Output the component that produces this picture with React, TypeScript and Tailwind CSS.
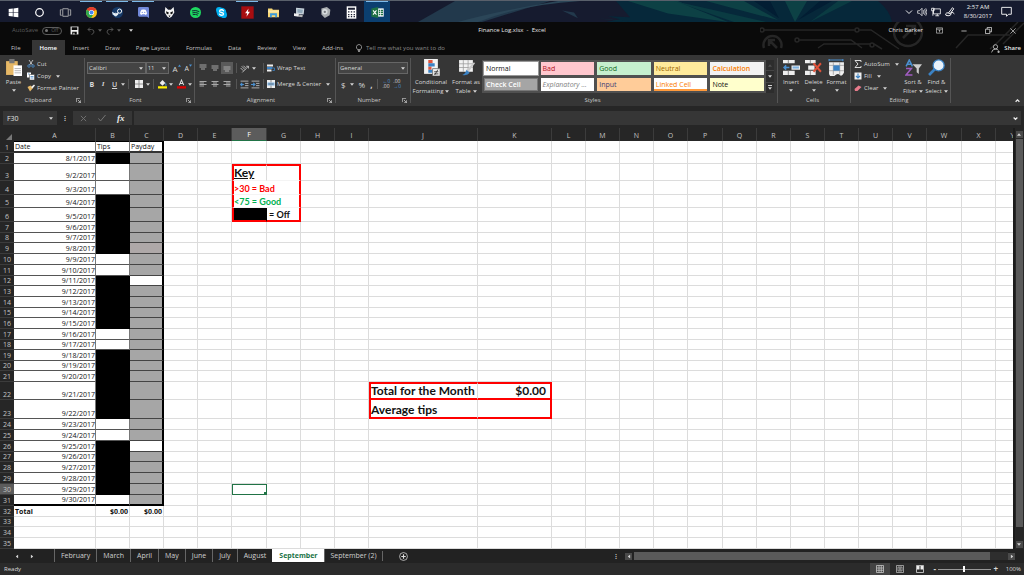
import type { ReactNode } from "react";
import clsx from "clsx";

const columns = [
  { name: "A", width: 82 },
  { name: "B", width: 34 },
  { name: "C", width: 34 },
  { name: "D", width: 34 },
  { name: "E", width: 34 },
  { name: "F", width: 35 },
  { name: "G", width: 34 },
  { name: "H", width: 34 },
  { name: "I", width: 34 },
  { name: "J", width: 109 },
  { name: "K", width: 74 },
  { name: "L", width: 34 },
  { name: "M", width: 34 },
  { name: "N", width: 34 },
  { name: "O", width: 34 },
  { name: "P", width: 35 },
  { name: "Q", width: 34 },
  { name: "R", width: 34 },
  { name: "S", width: 34 },
  { name: "T", width: 34 },
  { name: "U", width: 34 },
  { name: "V", width: 34 },
  { name: "W", width: 35 },
  { name: "X", width: 34 },
  { name: "Y", width: 34 },
];

const rowHeaderWidth = 14;
const tableWidth = columns.reduce((sum, col) => sum + col.width, rowHeaderWidth);

const rowHeights = [
  12, 11, 17, 14, 13, 14, 11, 10, 11, 11, 11, 10, 11, 11, 10, 11, 11, 10, 11, 10, 11, 18, 19, 11, 11,
  11, 10, 11, 11, 11, 11, 11, 10, 11, 11,
];

const dates = [
  "8/1/2017", "9/2/2017", "9/3/2017", "9/4/2017", "9/5/2017", "9/6/2017", "9/7/2017", "9/8/2017",
  "9/9/2017", "9/10/2017", "9/11/2017", "9/12/2017", "9/13/2017", "9/14/2017", "9/15/2017",
  "9/16/2017", "9/17/2017", "9/18/2017", "9/19/2017", "9/20/2017", "9/21/2017", "9/22/2017",
  "9/23/2017", "9/24/2017", "9/25/2017", "9/26/2017", "9/27/2017", "9/28/2017", "9/29/2017",
  "9/30/2017",
];

const offRows = [2, 5, 6, 7, 8, 9, 12, 13, 14, 15, 16, 19, 20, 21, 22, 23, 26, 27, 28, 29, 30];
const paydayRows = [12, 26];

const cellText: Record<string, string> = {
  A1: "Date",
  B1: "Tips",
  C1: "Payday",
  F3: "Key",
  F4: ">30 = Bad",
  F5: "<75 = Good",
  G6: "= Off",
  J22: "Total for the Month",
  K22: "$0.00",
  J23: "Average tips",
  A32: "Total",
  B32: "$0.00",
  C32: "$0.00",
};
dates.forEach((date, i) => {
  cellText[`A${i + 2}`] = date;
});

const specialCells: Record<string, string> = {
  A1: "border-t border-b-2 border-t-black border-r-[#777] border-b-[#333] pl-px leading-[8px]",
  B1: "border-t border-b-2 border-t-black border-r-[#777] border-b-[#333] pl-px leading-[8px]",
  C1: "border-t border-r-2 border-b-2 border-t-black border-r-black border-b-[#333] pl-px leading-[8px]",
  F3: "border-t-2 border-l-2 border-t-[#ff0000] border-l-[#ff0000] border-r-[#dcdcdc] border-b-[#f4f4f4] font-[Lato] text-[12px] leading-[14px] font-bold underline",
  G3: "border-t-2 border-r-2 border-t-[#ff0000] border-r-[#ff0000] border-b-[#f4f4f4]",
  F4: "border-l-2 border-l-[#ff0000] border-r-white border-b-[#f4f4f4] font-[Lato] text-[9px] leading-[11px] font-bold text-[#ff0000]",
  G4: "border-r-2 border-r-[#ff0000] border-b-[#f4f4f4]",
  F5: "border-l-2 border-l-[#ff0000] border-r-white border-b-[#f4f4f4] font-[Lato] text-[9px] leading-[11px] font-bold text-[#00b050]",
  G5: "border-r-2 border-r-[#ff0000] border-b-[#f4f4f4]",
  F6: "border-b-2 border-l-2 border-r-black border-b-[#ff0000] border-l-[#ff0000] bg-black",
  G6: "border-r-2 border-b-2 border-r-[#ff0000] border-b-[#ff0000] pl-[2px] font-[Lato] text-[9px] leading-[11px] font-bold",
  J22: "border-t-2 border-b-2 border-l-2 border-t-[#ff0000] border-r-[#dcdcdc] border-b-[#ff0000] border-l-[#ff0000] font-[Lato] text-[12px] leading-[14px] font-bold",
  K22: "border-t-2 border-r-2 border-b-2 border-t-[#ff0000] border-r-[#ff0000] border-b-[#ff0000] pr-1 text-right font-[Lato] text-[12px] leading-[14px] font-bold",
  J23: "border-b-2 border-l-2 border-r-[#dcdcdc] border-b-[#ff0000] border-l-[#ff0000] font-[Lato] text-[12px] leading-[14px] font-bold",
  K23: "border-r-2 border-b-2 border-r-[#ff0000] border-b-[#ff0000]",
  A32: "border-r-[#dcdcdc] border-b-[#dcdcdc] pl-px leading-[8px] font-bold",
  B32: "border-r-[#dcdcdc] border-b-[#dcdcdc] pr-px text-right leading-[8px] font-bold",
  C32: "border-r-[#dcdcdc] border-b-[#dcdcdc] pr-px text-right leading-[8px] font-bold",
  F30: "relative border-r-[#217346] border-b-[#217346] outline outline-1 -outline-offset-1 outline-[#217346]",
};

function cellClass(col: string, row: number) {
  const special = specialCells[`${col}${row}`];
  if (special) return special;
  const last = row === 31;
  if (row >= 2 && row <= 31) {
    if (col === "A") {
      return clsx(
        "border-r-[#777] text-right leading-[8px]",
        last ? "border-b-2 border-b-black" : "border-b-[#555]",
      );
    }
    if (col === "B") {
      if (last) return "border-b-2 border-r-[#777] border-b-black";
      return offRows.includes(row) ? "border-r-black border-b-black bg-black" : "border-r-[#777] border-b-[#555]";
    }
    if (col === "C") {
      return clsx(
        "border-r-2 border-r-black",
        paydayRows.includes(row) ? "bg-white" : row === 9 ? "bg-[#aea8a8]" : "bg-[#a6a6a6]",
        last ? "border-b-2 border-b-black" : "border-b-[#444]",
      );
    }
  }
  return "border-r-[#dcdcdc] border-b-[#dcdcdc]";
}

function Svg({ className, children, box = "0 0 16 16" }: { className: string; children: ReactNode; box?: string }) {
  return (
    <svg className={clsx("shrink-0", className)} viewBox={box} fill="none" aria-hidden="true">
      {children}
    </svg>
  );
}

function Caret({ className = "" }: { className?: string }) {
  return (
    <Svg className={clsx("h-[3px] w-[4px]", className)} box="0 0 8 5">
      <path d="M0 0h8L4 5z" fill="#d4d4d4" />
    </Svg>
  );
}

const taskbarApps: { name: string; state?: "open" | "active"; icon: ReactNode }[] = [
  {
    name: "Start",
    icon: <path d="M1 3l6-.9v5.400H1zM8 2l7-1v6.500H8zM1 8.500h6v5.400l-6-.9zM8 8.500h7V15l-7-1z" fill="#fff" />,
  },
  { name: "Cortana", icon: <circle cx="8" cy="8" r="5.500" stroke="#fff" strokeWidth="1.800" /> },
  {
    name: "Task View",
    icon: <path d="M4 2.500h8v11H4zM2.500 4H.5v8h2M13.500 4h2v8h-2" stroke="#bbb" strokeWidth="1.200" />,
  },
  {
    name: "Chrome",
    state: "open",
    icon: (
      <>
        <circle cx="8" cy="8" r="8" fill="#fbc116" />
        <path d="M8 8L1.100 4A8 8 0 0 1 14.900 4z" fill="#e33b2e" />
        <path d="M8 8L1.100 4A8 8 0 0 0 7.500 16L11.500 9.500z" fill="#2da94f" />
        <circle cx="8" cy="8" r="3.800" fill="#fff" />
        <circle cx="8" cy="8" r="2.900" fill="#4688f4" />
      </>
    ),
  },
  {
    name: "Steam",
    state: "open",
    icon: (
      <>
        <circle cx="8" cy="8" r="8" fill="#163a68" />
        <path d="M0 7l6 3 4-4-1 5-4 2-4-2z" fill="#dce8f4" />
        <circle cx="11" cy="6" r="3" fill="#163a68" stroke="#fff" strokeWidth="1.400" />
        <circle cx="5.500" cy="11" r="2" stroke="#fff" strokeWidth="1.200" />
      </>
    ),
  },
  {
    name: "Discord",
    state: "open",
    icon: (
      <>
        <path d="M2 0h12a2 2 0 0 1 2 2v14l-3-2H2a2 2 0 0 1-2-2V2a2 2 0 0 1 2-2z" fill="#7289da" />
        <path d="M5 4Q8 3 11 4q2 3 2 6l-2 1.500-1-1H6l-1 1L3 10q0-3 2-6z" fill="#fff" />
        <circle cx="6.200" cy="7.800" r="1" fill="#7289da" />
        <circle cx="9.800" cy="7.800" r="1" fill="#7289da" />
      </>
    ),
  },
  {
    name: "foobar2000",
    icon: (
      <>
        <path d="M2 0l4 4h4l4-4 1 8-4 6-3 2-3-2-4-6z" fill="#f4f4f4" />
        <path d="M3 6l4 2-1 3-2.500-1.500zM13 6L9 8l1 3 2.500-1.500zM6.500 12.500h3L8 15zM6 0l2 3 2-3z" fill="#111" />
      </>
    ),
  },
  {
    name: "Spotify",
    icon: (
      <>
        <circle cx="8" cy="8" r="8" fill="#1ed760" />
        <path d="M3.500 5.500q5-1.500 9.500 1M4 8.300q4.500-1.300 8 .8M4.500 11q3.500-1 6.500.6" stroke="#123" strokeWidth="1.400" strokeLinecap="round" />
      </>
    ),
  },
  {
    name: "Skype",
    icon: (
      <>
        <circle cx="8" cy="8" r="7" fill="#00aff0" />
        <circle cx="4.500" cy="4.500" r="4.500" fill="#00aff0" />
        <circle cx="11.500" cy="11.500" r="4.500" fill="#00aff0" />
        <path d="M11 5.500Q10 4 8 4 5.200 4 5.200 6 5.200 7.500 8 8t2.900 2q0 2-2.900 2-2.200 0-3-1.700" stroke="#fff" strokeWidth="1.900" strokeLinecap="round" />
      </>
    ),
  },
  {
    name: "Flash",
    state: "open",
    icon: (
      <>
        <path d="M-1-1h18v18H-1z" fill="#a80d10" />
        <path d="M9.500 2L4.500 9h3L6.500 14l5-7h-3z" fill="#fff" />
      </>
    ),
  },
  {
    name: "File Explorer",
    icon: (
      <>
        <path d="M0 2h6l1 2h9v11H0z" fill="#f8d775" />
        <path d="M0 5h16v3H0z" fill="#fbe8a6" />
        <path d="M3 9h10v6h-2.500v-3h-5v3H3z" fill="#3a9bdc" />
      </>
    ),
  },
  {
    name: "Remote Desktop",
    icon: (
      <>
        <path d="M3 1l12 1-1 9-11-1z" fill="#c9d4dc" />
        <path d="M5 3l8 1-1 5-7-1z" fill="#8fa7b8" />
        <path d="M0 9l7 1v4l-7-1z" fill="#eee" />
        <path d="M8 11l5 1-1 3-5-1z" fill="#b5b5b5" />
      </>
    ),
  },
  {
    name: "Speakers",
    icon: (
      <>
        <path d="M2 2l8-2 5 4-1 8-7 4-5-5z" fill="#a9adb0" />
        <circle cx="7" cy="7" r="4" fill="#d8dcde" />
        <circle cx="7" cy="7" r="1.700" fill="#787c80" />
      </>
    ),
  },
  {
    name: "Calculator",
    icon: (
      <>
        <path d="M1-1h14v18H1z" fill="#fff" />
        <path d="M3 1h10v3H3zM3 6h2v2H3zM7 6h2v2H7zM11 6h2v2h-2zM3 10h2v2H3zM7 10h2v2H7zM11 10h2v2h-2zM3 13h2v2H3zM7 13h2v2H7zM11 13h2v2h-2z" fill="#1a1e30" />
      </>
    ),
  },
  {
    name: "Excel",
    state: "active",
    icon: (
      <>
        <path d="M8 2h9v12H8z" fill="#fff" />
        <path d="M10 4h2v2h-2zM13 4h3v2h-3zM10 7h2v2h-2zM13 7h3v2h-3zM10 10h2v2h-2zM13 10h3v2h-3z" fill="#217346" />
        <path d="M-1 2l10-2v16l-10-2z" fill="#1d7044" />
        <path d="M1.500 5l5 6M6.500 5l-5 6" stroke="#fff" strokeWidth="1.500" />
      </>
    ),
  },
];

function Taskbar() {
  return (
    <header className="relative flex h-[22px] shrink-0 items-stretch overflow-hidden border-t border-[#59606b] bg-[#161b2f]">
      <svg className="absolute inset-y-0 right-[124px] h-full w-[510px]" viewBox="0 0 510 22" preserveAspectRatio="none" aria-hidden="true">
        <path d="M28 22L65 0h95L92 22z" fill="#22394c" />
        <path d="M88 22Q130 4 190 0h-22Q110 10 68 22z" fill="#2b4658" />
        <path d="M172 10l16 8-4-6z" fill="#22394c" />
        <path d="M216 22l14-3-12-3 22 1-14-17h262q12 10 14 22z" fill="#06283a" />
        <path d="M238 0l40 13 60 9-38-16-12-6zM316 0l72 20-34-20zM395 0l10 22 12-22zM222 20l20 2-34-4z" fill="#0d4145" />
        <path d="M284 0l92 22h-32zM448 0l-28 22 42-22z" fill="#0a3b42" />
        <path d="M364 0l25 18-9-18zM430 0l-22 20 34-20z" fill="#021d33" />
      </svg>
      <nav className="relative flex" aria-label="Taskbar">
        {taskbarApps.map((app) => (
          <button
            key={app.name}
            type="button"
            aria-label={app.name}
            className={clsx(
              "flex w-[26px] items-center justify-center",
              app.state === "active" && "bg-[#0b3f70]",
            )}
          >
            <span
              className={clsx(
                "flex h-full w-[22px] items-center justify-center border-t",
                app.state ? "border-[#7db9e8]" : "border-transparent",
              )}
            >
              <Svg className="size-[11px] overflow-visible">{app.icon}</Svg>
            </span>
          </button>
        ))}
      </nav>
      <div className="relative ml-auto flex items-center gap-1 pr-[12px] text-[#eee]">
        <Svg className="size-[8px]">
          <path d="M2 5l6 6 6-6" stroke="#fff" strokeWidth="1.800" />
        </Svg>
        <Svg className="size-[10px]">
          <path d="M1 6h3l4-4v12l-4-4H1zM10 5q2 3 0 6M12 3.500q3 4.500 0 9M14 2q4 6 0 12" stroke="#fff" strokeWidth="1.100" />
        </Svg>
        <Svg className="size-[10px]">
          <path d="M4 3h11v8H4zM7 14h6M10 11v3M1 2h4v4H1zM3 6v8" stroke="#fff" strokeWidth="1.300" />
        </Svg>
        <Svg className="size-[10px]">
          <path d="M6 9l6-8 2 2-6 8zM7 10q-5-2-6 1t4 3 5-4 5 1" stroke="#fff" strokeWidth="1.500" />
        </Svg>
        <div className="ml-1 w-[30px] text-center leading-[9px]">
          <div>2:57 AM</div>
          <div>8/30/2017</div>
        </div>
        <Svg className="ml-1 size-[11px]">
          <path d="M1 2h14v10h-4l-3 3v-3H1z" stroke="#fff" strokeWidth="1.300" />
        </Svg>
      </div>
    </header>
  );
}

function TitleBar() {
  return (
    <div className="flex h-[18px] shrink-0 items-center pb-px text-[#ccc]">
      <div className="flex flex-1 items-center pl-3">
        <label className="flex items-center gap-1 text-[#5c5c5c]">
          AutoSave
          <input type="checkbox" className="sr-only" />
          <span className="flex h-[8px] w-[20px] items-center gap-[3px] rounded-full border border-[#5c5c5c] px-[2px] text-[5px]">
            <span className="size-[3px] rounded-full bg-[#777]" />
            Off
          </span>
        </label>
        <button type="button" aria-label="Save" className="ml-2">
          <Svg className="size-[9px]">
            <path d="M1 1h14v14H1z" fill="#f2f2f2" />
            <path d="M3 2h10v5H3zM4 10h8v5H4z" fill="#0a0a0a" />
            <path d="M6 12h2v3H6z" fill="#f2f2f2" />
          </Svg>
        </button>
        <button type="button" aria-label="Undo" className="ml-2 flex items-center gap-[3px] opacity-40">
          <Svg className="size-[8px]">
            <path d="M6 1L2 5l4 4M2 5h7q5 0 5 5-1 4-5 5" stroke="#ccc" strokeWidth="1.800" />
          </Svg>
          <Caret />
        </button>
        <button type="button" aria-label="Redo" className="ml-1 flex items-center gap-[3px] opacity-40">
          <Svg className="size-[8px]">
            <path d="M10 1l4 4-4 4M14 5H7q-5 0-5 5 1 4 5 5" stroke="#ccc" strokeWidth="1.800" />
          </Svg>
          <Caret />
        </button>
        <Caret className="ml-2" />
      </div>
      <h1 className="pr-1 text-[#e8e8e8]">Finance Log.xlsx&nbsp; -&nbsp; Excel</h1>
      <div className="flex flex-1 items-center justify-end pr-[8px]">
        <span className="mr-[13px] text-[#e8e8e8]">Chris Barker</span>
        <div className="flex items-center gap-[18px]">
          <button type="button" aria-label="Ribbon display options">
            <Svg className="size-[7px]">
              <path d="M1 2h14v12H1zM1 5h14M8 12V7M6 9l2-2 2 2" stroke="#ddd" strokeWidth="1.400" />
            </Svg>
          </button>
          <button type="button" aria-label="Minimize">
            <Svg className="size-[6px]">
              <path d="M1 8h14" stroke="#ddd" strokeWidth="2" />
            </Svg>
          </button>
          <button type="button" aria-label="Restore">
            <Svg className="size-[7px]">
              <path d="M1 5h10v10H1zM5 5V1h10v10h-4" stroke="#ddd" strokeWidth="1.800" />
            </Svg>
          </button>
          <button type="button" aria-label="Close">
            <Svg className="size-[6px]">
              <path d="M1 1l14 14M15 1L1 15" stroke="#ddd" strokeWidth="1.800" />
            </Svg>
          </button>
        </div>
      </div>
    </div>
  );
}

const ribbonTabs = ["File", "Home", "Insert", "Draw", "Page Layout", "Formulas", "Data", "Review", "View", "Add-ins"];

function RibbonTabs() {
  return (
    <div className="flex h-[15px] shrink-0 items-stretch text-[#c4c4c4]">
      {ribbonTabs.map((tab) => (
        <button
          key={tab}
          type="button"
          className={clsx(
            "pt-px whitespace-nowrap",
            tab === "File" ? "px-[11px]" : "px-2",
            tab === "Home" && "bg-[#363636] font-semibold text-white",
          )}
        >
          {tab}
        </button>
      ))}
      <label className="ml-1 flex flex-1 items-center gap-[3px] pt-px">
        <Svg className="size-[8px]">
          <path d="M5 11Q2 8 3 5q1-4 5-4t5 4q1 3-2 6zM5.500 13h5M6 15h4" stroke="#bbb" strokeWidth="1.400" />
        </Svg>
        <input
          className="w-32 bg-transparent outline-none placeholder:text-[#8a8a8a]"
          placeholder="Tell me what you want to do"
          aria-label="Tell me what you want to do"
        />
      </label>
      <button type="button" className="flex items-center gap-1 pt-px pr-[3px] font-semibold text-[#e8e8e8]">
        <Svg className="size-[9px]">
          <circle cx="8" cy="5" r="3.800" stroke="#ddd" strokeWidth="1.300" />
          <path d="M1 15q1-6 7-6 3 0 5 2M11 14h5M13.500 11.500v4.500" stroke="#ddd" strokeWidth="1.300" />
        </Svg>
        Share
      </button>
    </div>
  );
}

function Group({ label, className, launcher, children }: { label: string; className: string; launcher?: boolean; children: ReactNode }) {
  return (
    <section className={clsx("flex shrink-0", className)} aria-label={label}>
      <div className="flex min-w-0 flex-1 flex-col">
        <div className="h-[40px]">{children}</div>
        <div className="flex h-[11px] items-center pr-[3px] text-[#c8c8c8]">
          <span className="flex-1 text-center">{label}</span>
          {launcher && (
            <button type="button" aria-label={`${label} settings`}>
              <Svg className="size-[5px]">
                <path d="M1 13V1h12M6 6l8 8M15 7v8H7" stroke="#ddd" strokeWidth="2.200" />
              </Svg>
            </button>
          )}
        </div>
      </div>
      <div className="my-[3px] w-px bg-[#555]" />
    </section>
  );
}

function BigButton({ icon, lines, className, caret }: { icon: ReactNode; lines: string[]; className: string; caret?: "below" | "inline" }) {
  return (
    <button type="button" className={clsx("flex shrink-0 flex-col items-center pt-1 leading-[9px]", className)}>
      <Svg className="mb-[2px] size-[17px]">{icon}</Svg>
      {lines.map((line, i) => (
        <span key={line} className="flex items-center gap-[2px] whitespace-nowrap">
          {line}
          {caret === "inline" && i === lines.length - 1 && <Caret />}
        </span>
      ))}
      {caret === "below" && <Caret className="mt-[2px]" />}
    </button>
  );
}

function SmallButton({ icon, label, caret }: { icon: ReactNode; label: string; caret?: boolean }) {
  return (
    <button type="button" className="flex h-[12px] items-center gap-[2px] whitespace-nowrap">
      <Svg className="size-[8px]">{icon}</Svg>
      {label}
      {caret && <Caret className="ml-[3px]" />}
    </button>
  );
}

function Combo({ label, value, className }: { label: string; value: string; className: string }) {
  return (
    <div className={clsx("relative h-[12px] border border-[#666] bg-[#444]", className)}>
      <select aria-label={label} defaultValue={value} className="block h-[10px] w-full appearance-none bg-transparent px-px leading-[10px] outline-none">
        <option>{value}</option>
      </select>
      <Caret className="pointer-events-none absolute top-[4px] right-[2px]" />
    </div>
  );
}

function AlignIcon({ d, active }: { d: string; active?: boolean }) {
  return (
    <button type="button" aria-label="Align" className={clsx("flex h-[12px] w-[12px] items-center justify-center", active && "bg-[#5a5a5a]")}>
      <Svg className="size-[8px]">
        <path d={d} stroke="#b5b5b5" strokeWidth="1.800" />
      </Svg>
    </button>
  );
}

function Divider() {
  return <span className="mx-[3px] h-[10px] w-px bg-[#555]" />;
}

const cellStyles = [
  { name: "Normal", style: "bg-white text-[#111] outline outline-1 outline-[#999]" },
  { name: "Bad", style: "bg-[#ffc7ce] text-[#b01525]" },
  { name: "Good", style: "bg-[#c6efce] text-[#126a1c]" },
  { name: "Neutral", style: "bg-[#ffeb9c] text-[#9c6500]" },
  { name: "Calculation", style: "bg-[#f2f2f2] font-semibold text-[#fa7d00]" },
  { name: "Check Cell", style: "bg-[#a5a5a5] font-semibold text-white inset-ring inset-ring-[#777]" },
  { name: "Explanatory ...", style: "bg-white italic text-[#7f7f7f]" },
  { name: "Input", style: "bg-[#ffcc99] text-[#3f3f76]" },
  { name: "Linked Cell", style: "bg-white text-[#fa7d00] shadow-[inset_0_-2px_#ff9a3c]" },
  { name: "Note", style: "bg-[#ffffcc] text-[#111]" },
];

function Ribbon() {
  return (
    <div className="flex h-[51px] shrink-0 items-stretch overflow-hidden bg-[#363636] text-[#d8d8d8]">
      <Group label="Clipboard" className="w-[85px]" launcher>
        <div className="flex">
          <BigButton
            className="w-[27px]"
            lines={["Paste"]}
            caret="below"
            icon={
              <>
                <path d="M1 2h11v13H1z" fill="#e6b866" />
                <path d="M4 0h5v4H4z" fill="#777" />
                <path d="M8 6h8v10H8z" fill="#fff" />
                <path d="M9 9h6M9 11h6M9 13h6" stroke="#aaa" strokeWidth=".8" />
              </>
            }
          />
          <div className="flex flex-col pt-[3px]">
            <SmallButton
              label="Cut"
              icon={
                <>
                  <path d="M4 0l7 10M12 0L5 10" stroke="#ddd" strokeWidth="1.600" />
                  <circle cx="4" cy="12" r="2.500" stroke="#4a90d0" strokeWidth="1.600" />
                  <circle cx="12" cy="12" r="2.500" stroke="#4a90d0" strokeWidth="1.600" />
                </>
              }
            />
            <SmallButton
              label="Copy"
              caret
              icon={
                <>
                  <path d="M0 1h8v10H0z" fill="#fff" />
                  <path d="M5 5h10v11H5z" fill="#fff" stroke="#363636" />
                  <path d="M2 4h3M7 9h6M7 12h6" stroke="#3b82c4" strokeWidth="1.500" />
                </>
              }
            />
            <SmallButton
              label="Format Painter"
              icon={
                <>
                  <path d="M1 6l6-3 5 5-6 7z" fill="#e6b866" />
                  <path d="M8 6l6-5 2 2-5 6z" fill="#eee" />
                </>
              }
            />
          </div>
        </div>
      </Group>

      <Group label="Font" className="w-[110px]" launcher>
        <div className="flex flex-col gap-1 px-[2px] pt-[7px]">
          <div className="flex items-center">
            <Combo label="Font name" value="Calibri" className="w-[59px]" />
            <Combo label="Font size" value="11" className="w-[23px]" />
            <button type="button" aria-label="Increase font size" className="ml-[4px] flex items-start text-[8px]">
              A
              <Svg className="size-[3px]">
                <path d="M0 14L8 2l8 12z" fill="#4a90d0" />
              </Svg>
            </button>
            <button type="button" aria-label="Decrease font size" className="ml-[4px] flex items-start text-[7px]">
              A
              <Svg className="size-[3px]">
                <path d="M0 2h16L8 14z" fill="#4a90d0" />
              </Svg>
            </button>
          </div>
          <div className="flex h-[12px] items-center pl-[2px] text-[7px]">
            <button type="button" className="w-[6px] font-bold">B</button>
            <button type="button" className="ml-[6px] w-[6px] font-[Liberation_Serif] font-bold italic">I</button>
            <button type="button" className="ml-[6px] flex items-center gap-[4px]">
              <span className="font-semibold underline">U</span>
              <Caret />
            </button>
            <Divider />
            <button type="button" aria-label="Borders" className="ml-[3px] flex items-center gap-[3px]">
              <Svg className="size-[8px]">
                <path d="M0 0h16v16H0z" fill="#eee" />
                <path d="M8 0v16M0 8h16" stroke="#777" strokeWidth="1.500" />
              </Svg>
              <Caret />
            </button>
            <Divider />
            <button type="button" aria-label="Fill color" className="ml-px flex items-center gap-[2px]">
              <Svg className="h-[10px] w-[9px]">
                <path d="M3 6l5-5 5 5-5 5z" fill="#eee" />
                <path d="M13 5q3 3 2 6h-2z" fill="#4a90d0" />
                <path d="M0 12h16v4H0z" fill="#ffef00" />
              </Svg>
              <Caret />
            </button>
            <button type="button" aria-label="Font color" className="ml-[4px] flex items-center gap-[2px]">
              <Svg className="h-[10px] w-[9px]">
                <path d="M4 10l4-9 4 9M5.500 7h5" stroke="#ddd" strokeWidth="1.800" />
                <path d="M0 12h16v4H0z" fill="#e00000" />
              </Svg>
              <Caret />
            </button>
          </div>
        </div>
      </Group>

      <Group label="Alignment" className="w-[141px]" launcher>
        <div className="flex flex-col gap-1 pl-[2px] pt-[7px]">
          <div className="flex h-[12px] items-center">
            <AlignIcon d="M1 2h14M1 6h14M4 10h8" />
            <AlignIcon d="M1 4h14M1 8h14M4 12h8" />
            <AlignIcon d="M1 6h14M1 10h14M4 14h8" active />
            <Divider />
            <button type="button" aria-label="Orientation" className="mr-[4px] flex items-center gap-[3px]">
              <Svg className="size-[9px]">
                <path d="M1 7l5 5M3 4l6 6M6 3l4 4M4 15L15 4M15 4v4M15 4h-4" stroke="#ccc" strokeWidth="1.500" />
              </Svg>
              <Caret />
            </button>
            <Divider />
            <SmallButton
              label="Wrap Text"
              icon={
                <>
                  <path d="M0 1h12v4H0zM0 11h9v4H0z" fill="#eee" />
                  <path d="M0 6h11v4H0z" fill="#3b82c4" />
                  <path d="M12 8h3v5h-4" stroke="#3b82c4" strokeWidth="1.600" />
                </>
              }
            />
          </div>
          <div className="flex h-[12px] items-center">
            <AlignIcon d="M1 3h14M1 6h9M1 9h14M1 12h9" />
            <AlignIcon d="M1 3h14M4 6h8M1 9h14M4 12h8" />
            <AlignIcon d="M1 3h14M6 6h9M1 9h14M6 12h9" />
            <Divider />
            <button type="button" aria-label="Decrease indent" className="mr-[2px]">
              <Svg className="size-[9px]">
                <path d="M1 2h14M9 6h6M9 10h6M1 14h14" stroke="#bbb" strokeWidth="1.600" />
                <path d="M7 8H1M4 5L1 8l3 3" stroke="#4a90d0" strokeWidth="2" />
              </Svg>
            </button>
            <button type="button" aria-label="Increase indent">
              <Svg className="size-[9px]">
                <path d="M1 2h14M9 6h6M9 10h6M1 14h14" stroke="#bbb" strokeWidth="1.600" />
                <path d="M0 8h6M4 5l3 3-3 3" stroke="#4a90d0" strokeWidth="2" />
              </Svg>
            </button>
            <Divider />
            <SmallButton
              label="Merge & Center"
              caret
              icon={
                <>
                  <path d="M0 0h16v16H0z" fill="#eee" />
                  <path d="M1 5h14v6H1z" fill="#7fb2e0" />
                  <path d="M3 8h10M8 0v5M8 11v5" stroke="#555" strokeWidth="1.300" />
                </>
              }
            />
          </div>
        </div>
      </Group>

      <Group label="Number" className="w-[75px]" launcher>
        <div className="flex flex-col gap-1 px-[2px] pt-[7px]">
          <Combo label="Number format" value="General" className="w-[70px]" />
          <div className="flex h-[12px] items-center pl-[3px] text-[8px]">
            <button type="button" className="flex items-center gap-[4px]">
              $<Caret />
            </button>
            <button type="button" className="ml-[5px]">%</button>
            <button type="button" className="ml-[5px] font-bold">,</button>
            <span className="ml-[2px]" />
            <Divider />
            <button type="button" aria-label="Increase decimal" className="ml-px text-left text-[5px] leading-[5px]">
              <span className="block text-[#4a90d0]">←0</span>
              .00
            </button>
            <button type="button" aria-label="Decrease decimal" className="ml-[3px] text-left text-[5px] leading-[5px]">
              .00
              <span className="block text-[#4a90d0]">→0</span>
            </button>
          </div>
        </div>
      </Group>

      <Group label="Styles" className="w-[367px]">
        <div className="flex">
          <BigButton
            className="w-[40px]"
            lines={["Conditional", "Formatting"]}
            caret="inline"
            icon={
              <>
                <path d="M1 0h13v14H1z" fill="#f2f2f2" />
                <path d="M5 1h4v3H5zM5 7h3v3H5z" fill="#e0523a" />
                <path d="M5 4h6v3H5zM5 10h4v3H5z" fill="#3b82c4" />
                <path d="M9 9h7v7H9z" fill="#eee" stroke="#666" strokeWidth=".7" />
                <path d="M10.500 12h4M10.500 14h4M14 10l-3 5" stroke="#333" strokeWidth=".8" />
              </>
            }
          />
          <BigButton
            className="w-[30px]"
            lines={["Format as", "Table"]}
            caret="inline"
            icon={
              <>
                <path d="M1 1h13v11H1z" fill="#f2f2f2" />
                <path d="M1 4.500h13M1 8h13M5 1v11M9.500 1v11" stroke="#999" strokeWidth=".7" />
                <path d="M15 3l1 1-6 8-2-2z" fill="#ccc" />
                <path d="M8 10l3 3q-2 3-7 2 3-1 4-5z" fill="#3b82c4" />
              </>
            }
          />
          <div className="mt-[5px] ml-px flex h-[33px] flex-1 bg-[#505050]">
            <div className="grid flex-1 grid-cols-5 grid-rows-2 gap-[3px] p-[2px]">
              {cellStyles.map((cell) => (
                <button
                  key={cell.name}
                  type="button"
                  className={clsx("overflow-hidden px-[2px] text-left text-[7px] leading-[9px] whitespace-nowrap", cell.style)}
                >
                  {cell.name}
                </button>
              ))}
            </div>
            <div className="flex w-[8px] flex-col gap-px bg-[#444]">
              {["up", "down", "more"].map((dir) => (
                <button key={dir} type="button" aria-label={`Styles ${dir}`} className="flex flex-1 flex-col items-center justify-center gap-px bg-[#2d2d2d]">
                  {dir === "more" && <span className="h-px w-[4px] bg-[#d4d4d4]" />}
                  <Caret className={dir === "up" ? "rotate-180 opacity-20" : ""} />
                </button>
              ))}
            </div>
          </div>
          <span className="w-[3px]" />
        </div>
      </Group>

      <Group label="Cells" className="w-[73px]">
        <div className="flex pl-[2px]">
          <BigButton
            className="w-[22px]"
            lines={["Insert"]}
            caret="below"
            icon={
              <>
                <path d="M0 1h11v3H0zM0 11h11v4H0zM8 6h8v4H8z" fill="#eee" />
                <path d="M5 1v3M5 11v4" stroke="#777" strokeWidth=".8" />
                <path d="M9 7h6v2H9z" fill="#7fb2e0" />
                <path d="M6 8H1M3 6L1 8l2 2" stroke="#4a90d0" strokeWidth="1.400" />
              </>
            }
          />
          <BigButton
            className="w-[23px]"
            lines={["Delete"]}
            caret="below"
            icon={
              <>
                <path d="M0 1h10v3H0zM0 11h10v4H0zM3 6h6v4H3z" fill="#eee" />
                <path d="M5 1v3M5 11v4" stroke="#777" strokeWidth=".8" />
                <path d="M8 4l7 8M15 4l-7 8" stroke="#e0523a" strokeWidth="1.800" />
              </>
            }
          />
          <BigButton
            className="w-[23px]"
            lines={["Format"]}
            caret="below"
            icon={
              <>
                <path d="M1 1h13M1 0v2M14 0v2" stroke="#4a90d0" />
                <path d="M1 3h14v10q-2 4-4 2t-5 1-5-2z" fill="#eee" />
                <path d="M1 6h14M1 11h14M5 3v12M11 3v12" stroke="#999" strokeWidth=".7" />
                <path d="M5 6h6v5H5z" fill="#3b82c4" />
              </>
            }
          />
        </div>
      </Group>

      <Group label="Editing" className="w-[100px]">
        <div className="flex pl-[3px]">
          <div className="flex w-[47px] flex-col pt-[3px]">
            <SmallButton label="AutoSum" caret icon={<path d="M14 4V1H2l6 7-6 7h12v-3" stroke="#eee" strokeWidth="1.800" />} />
            <SmallButton
              label="Fill"
              caret
              icon={
                <>
                  <path d="M1 1h14v14H1z" fill="#eee" />
                  <path d="M8 3v9M4 8l4 4 4-4" stroke="#3b82c4" strokeWidth="2.200" />
                </>
              }
            />
            <SmallButton label="Clear" caret icon={<path d="M1 10l8-7 6 3-8 8-5 0z" fill="#e87c8c" />} />
          </div>
          <BigButton
            className="w-[24px]"
            lines={["Sort &", "Filter"]}
            caret="inline"
            icon={
              <>
                <path d="M1 7l3-6 3 6M2 5h4" stroke="#4a90d0" strokeWidth="1.400" />
                <path d="M1 9h5l-5 6h6" stroke="#a05cc0" strokeWidth="1.400" />
                <path d="M7 5h9l-3 4v5l-2-1.500V9z" fill="#ccc" />
              </>
            }
          />
          <BigButton
            className="w-[23px]"
            lines={["Find &", "Select"]}
            caret="inline"
            icon={
              <>
                <path d="M7 9l-6 6" stroke="#3b82c4" strokeWidth="2.500" />
                <circle cx="10" cy="6" r="5.200" fill="#e8f2fa" stroke="#3b82c4" strokeWidth="1.200" />
              </>
            }
          />
        </div>
      </Group>
      <button type="button" aria-label="Collapse ribbon" className="mt-auto mr-[4px] mb-[3px] ml-auto">
        <Svg className="size-[5px]">
          <path d="M2 12l6-6 6 6" stroke="#eee" strokeWidth="4" />
        </Svg>
      </button>
    </div>
  );
}

function FormulaBar() {
  return (
    <div className="flex h-[22px] shrink-0 items-stretch bg-[#262626] px-[3px] pt-[5px] pb-[3px] text-[7px]">
      <div className="flex w-[54px] items-center bg-[#363636] pr-1">
        <input aria-label="Name box" defaultValue="F30" className="min-w-0 flex-1 bg-transparent px-1 text-[#e0e0e0] outline-none" />
        <Caret />
      </div>
      <div className="flex w-4 items-center justify-center font-bold text-[#ddd]">⁝</div>
      <div className="flex w-[59px] items-center justify-around bg-[#363636] px-[2px]">
        <button type="button" aria-label="Cancel">
          <Svg className="size-[7px]">
            <path d="M2 2l12 12M14 2L2 14" stroke="#777" strokeWidth="2" />
          </Svg>
        </button>
        <button type="button" aria-label="Enter">
          <Svg className="size-[8px]">
            <path d="M1 9l4 5L15 2" stroke="#777" strokeWidth="2" />
          </Svg>
        </button>
        <button type="button" className="font-[Liberation_Serif] text-[9px] leading-[10px] font-bold text-[#eee] italic">
          fx
        </button>
      </div>
      <div className="ml-[2px] flex flex-1 items-center bg-[#363636] pr-[3px]">
        <input aria-label="Formula" className="flex-1 bg-transparent px-1 text-[#e0e0e0] outline-none" />
        <Svg className="size-[5px]">
          <path d="M2 5l6 6 6-6" stroke="#eee" strokeWidth="4" />
        </Svg>
      </div>
    </div>
  );
}

function Sheet() {
  return (
    <div className="flex min-h-0 flex-1 bg-[#262626]">
      <div className="min-w-0 flex-1 overflow-hidden border-r-2 border-[#1c1c1c] bg-white">
        <table className="table-fixed border-separate border-spacing-0 text-[7px]" style={{ width: tableWidth }}>
          <colgroup>
            <col style={{ width: rowHeaderWidth }} />
            {columns.map((col) => (
              <col key={col.name} style={{ width: col.width }} />
            ))}
          </colgroup>
          <thead>
            <tr className="h-[13px] bg-[#262626] text-[#c4c4c4]">
              <th className="p-0 pr-[2px] pb-px align-bottom">
                <Svg className="ml-auto size-[6px]">
                  <path d="M16 0v16H0z" fill="#777" />
                </Svg>
              </th>
              {columns.map((col) => (
                <th
                  key={col.name}
                  className={clsx(
                    "border-r border-[#3c3c3c] p-0 pt-px text-center leading-[11px] font-medium",
                    col.name === "F" && "border-b border-b-[#217346] bg-[#5c5c5c] text-white",
                  )}
                >
                  {col.name}
                </th>
              ))}
            </tr>
          </thead>
          <tbody className="text-[#111]">
            {rowHeights.map((height, i) => {
              const row = i + 1;
              return (
                <tr key={row} style={{ height }}>
                  <th
                    className={clsx(
                      "border-b border-[#3c3c3c] p-0 align-bottom leading-[8px] font-normal text-[#c4c4c4]",
                      row === 30 ? "bg-[#5c5c5c]" : "bg-[#262626]",
                    )}
                  >
                    {row}
                  </th>
                  {columns.map((col) => (
                    <td
                      key={col.name}
                      className={clsx("border-r border-b p-0 align-bottom whitespace-nowrap", cellClass(col.name, row))}
                    >
                      {cellText[`${col.name}${row}`]}
                      {col.name === "F" && row === 30 && (
                        <span className="absolute -right-px -bottom-px size-[3px] bg-[#217346]" />
                      )}
                    </td>
                  ))}
                </tr>
              );
            })}
          </tbody>
        </table>
      </div>
      <div className="flex w-[9px] flex-col items-center gap-px pt-[3px] pr-px pb-px">
        <span className="flex size-[7px] items-center justify-center bg-[#4a4a4a]">
          <Caret className="rotate-180" />
        </span>
        <span className="w-[7px] flex-1 bg-[#5a5a5a]" />
        <span className="h-[12px]" />
        <span className="flex size-[7px] items-center justify-center bg-[#4a4a4a]">
          <Caret />
        </span>
      </div>
    </div>
  );
}

const sheetTabs = ["February", "March", "April", "May", "June", "July", "August", "September", "September (2)"];

function SheetTabs() {
  return (
    <div className="flex h-[14px] shrink-0 items-stretch bg-[#222] text-[7px] text-[#d0d0d0]">
      <div className="flex w-[54px] items-center gap-[11px] pl-[15px]">
        <Caret className="rotate-90" />
        <Caret className="-rotate-90" />
      </div>
      {sheetTabs.map((tab) => (
        <button
          key={tab}
          type="button"
          className={clsx(
            "mb-px border-l px-[6px] whitespace-nowrap",
            tab === "September" ? "border-white bg-white font-bold text-[#217346]" : "border-[#666]",
          )}
        >
          {tab}
        </button>
      ))}
      <button type="button" aria-label="New sheet" className="my-[2px] border-l border-[#666] pl-[16px]">
        <Svg className="size-[9px]">
          <circle cx="8" cy="8" r="7" stroke="#ddd" strokeWidth="1.300" />
          <path d="M8 4v8M4 8h8" stroke="#ddd" strokeWidth="2" />
        </Svg>
      </button>
      <div className="ml-auto flex items-center pr-[9px]">
        <span className="mr-[8px] font-bold">⁝</span>
        <span className="flex size-[7px] items-center justify-center bg-[#4a4a4a]">
          <Caret className="rotate-90" />
        </span>
        <span className="ml-[2px] h-[8px] w-[356px] bg-[#5a5a5a]" />
        <span className="h-[8px] w-[18px] bg-[#2e2e2e]" />
        <span className="flex size-[7px] items-center justify-center bg-[#4a4a4a]">
          <Caret className="-rotate-90" />
        </span>
      </div>
    </div>
  );
}

function StatusBar() {
  return (
    <footer className="flex h-[12px] shrink-0 items-center bg-[#2b2b2b] pr-[3px] pl-1 text-[#d8d8d8]">
      <span className="flex-1">Ready</span>
      <button type="button" aria-label="Normal view" className="flex h-full w-5 items-center justify-center bg-[#444]">
        <Svg className="size-[8px]">
          <path d="M1 1h14v14H1zM1 6h14M1 10.500h14M6 1v14M10.500 1v14" stroke="#ccc" strokeWidth="1.500" />
        </Svg>
      </button>
      <button type="button" aria-label="Page layout view" className="flex w-5 justify-center">
        <Svg className="size-[8px]">
          <path d="M1 1h14v14H1zM4 4h8v8H4zM6 6h4M6 8h4M6 10h4" stroke="#bbb" strokeWidth="1.500" />
        </Svg>
      </button>
      <button type="button" aria-label="Page break view" className="flex w-5 justify-center">
        <Svg className="size-[8px]">
          <path d="M1 1h14v14H1z" stroke="#ddd" strokeWidth="1.600" />
          <path d="M2 2h5v7H2zM9 2h5v7H9z" fill="#eee" />
        </Svg>
      </button>
      <button type="button" className="ml-[2px] w-[6px] text-[8px] leading-[8px] font-bold">-</button>
      <input
        type="range"
        aria-label="Zoom"
        defaultValue={50}
        className="h-px w-[53px] appearance-none bg-[#999] [&::-webkit-slider-thumb]:h-[6px] [&::-webkit-slider-thumb]:w-[2px] [&::-webkit-slider-thumb]:appearance-none [&::-webkit-slider-thumb]:bg-white"
      />
      <button type="button" className="ml-[2px] w-[6px] text-[8px] leading-[8px] font-bold">+</button>
      <span className="ml-[7px]">100%</span>
    </footer>
  );
}

export default function App() {
  return (
    <div className="flex h-screen flex-col overflow-hidden bg-[#0a0a0a] font-['Open_Sans','Noto_Sans',sans-serif] text-[6px] leading-[9px]">
      <Taskbar />
      <div className="relative shrink-0">
        <svg className="absolute top-0 right-0 h-[33px] w-[264px]" viewBox="0 0 264 33" fill="none" stroke="#262626" strokeWidth="1.500" aria-hidden="true">
          <circle cx="2" cy="8" r="2" />
          <path d="M4 8h91M99 8h12l28 19M39 18h52l11 8M58 26l6-4h46M114 22l8 5" />
          <circle cx="97" cy="8" r="2" />
          <circle cx="37" cy="18" r="2" />
          <circle cx="112" cy="23" r="2" />
          <path d="M4 26a9 9 0 1 1 17 0M17 26l-8-8M9 24v-6h6" strokeWidth="2.500" />
          <circle cx="148" cy="10" r="14" strokeWidth="2.500" />
          <path d="M143 16l11-11M146 4h9v9" strokeWidth="2.500" />
          <path d="M196 26l12-13h42M238 20l20-20M243 22l21-21M230 27l8-7" />
        </svg>
        <div className="relative">
          <TitleBar />
          <RibbonTabs />
        </div>
      </div>
      <Ribbon />
      <FormulaBar />
      <Sheet />
      <SheetTabs />
      <StatusBar />
    </div>
  );
}
